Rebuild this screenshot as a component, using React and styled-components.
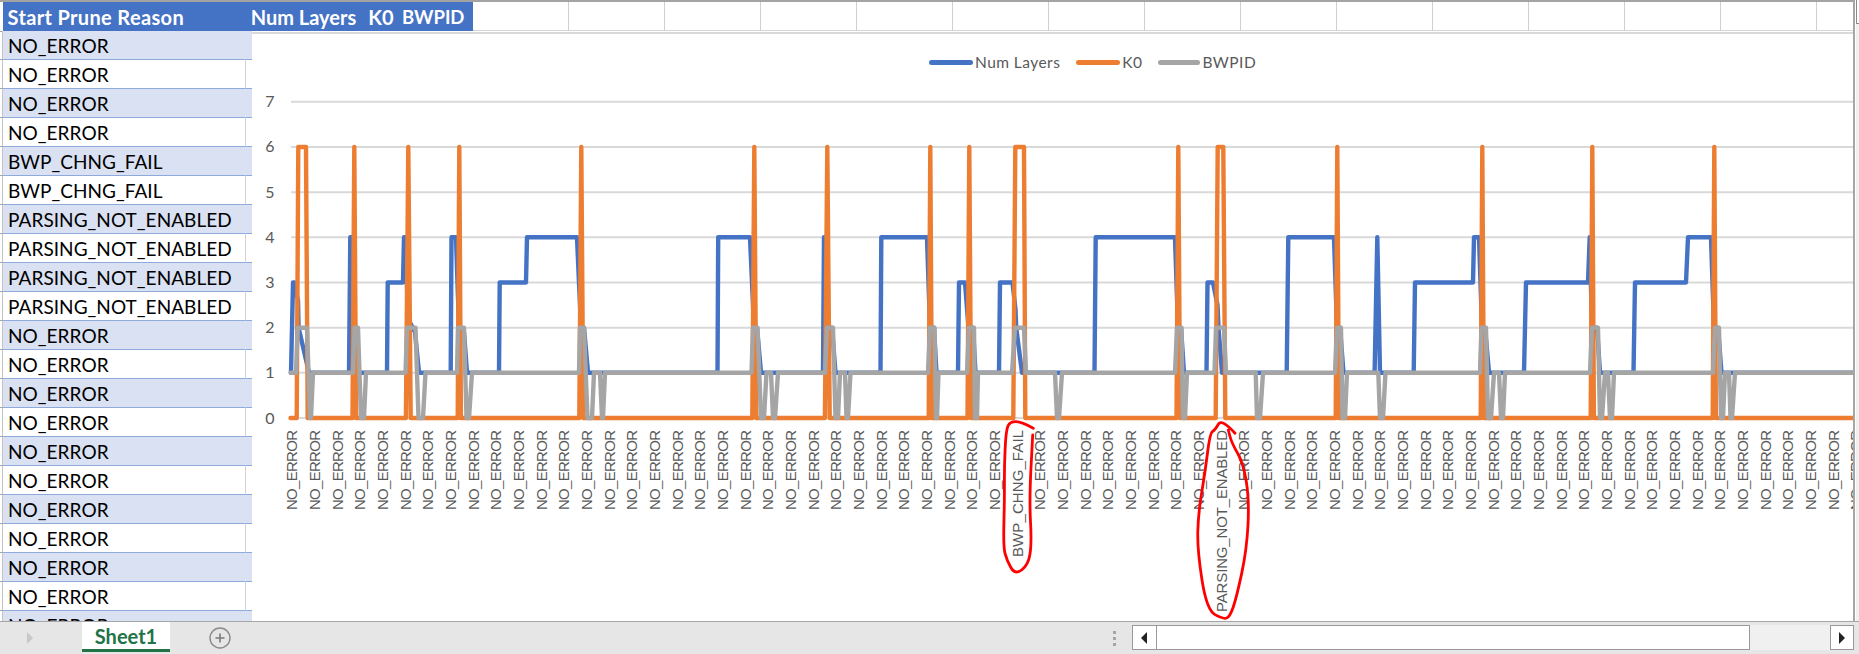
import styled, { createGlobalStyle } from "styled-components";

const GlobalStyle = createGlobalStyle`
  html, body {
    margin: 0;
    padding: 0;
    background: #fff;
    overflow: hidden;
  }
`;

const rows = [
  ...Array(4).fill("NO_ERROR"),
  ...Array(2).fill("BWP_CHNG_FAIL"),
  ...Array(4).fill("PARSING_NOT_ENABLED"),
  ...Array(11).fill("NO_ERROR"),
];

const Y0 = 418;
const STEP = 45.17;
const toY = (v) => Y0 - STEP * v;
const line = (pts) => pts.map(([x, v]) => `${x},${toY(v).toFixed(1)}`).join(" ");

const spike = (x, w = 1.3) => [[x - w, 0], [x, 6], [x + w, 0]];

const orange = [
  [290.5, 0],
  [296.7, 0], [298.3, 6], [306, 6], [307.7, 0],
  ...spike(354.3, 1.8),
  ...spike(408.3, 2.4),
  ...spike(459.3, 1.6),
  ...spike(581.3, 2),
  ...spike(754.3, 2),
  ...spike(827.3, 2.4),
  ...spike(930.3, 1.6),
  ...spike(969.3, 1.8),
  [1013.3, 0], [1015.3, 6], [1024, 6], [1025.3, 0],
  ...spike(1178.3, 1.8),
  [1215.7, 0], [1217.7, 6], [1223.3, 6], [1225.3, 0],
  ...spike(1337.3, 1.6),
  ...spike(1482.3, 1.6),
  ...spike(1592.3, 1.6),
  ...spike(1714.3, 1.6),
  [1853, 0],
];

const blue = [
  [291, 1], [293, 3], [294.5, 3], [298, 2.6], [298.6, 2], [309, 1],
  [349, 1], [350.3, 4], [352, 4], [354.5, 2.2], [359, 1], [361.7, 1],
  [387, 1], [387.7, 3], [403, 3], [404, 4], [405.5, 4], [408, 2.2], [415, 1.9], [419, 1],
  [450.7, 1], [451.5, 4], [456, 4], [459, 2], [464, 1.9], [467, 1],
  [499, 1], [499.7, 3], [526, 3], [527, 4], [577, 4], [581, 2], [584, 2], [588, 1],
  [717.5, 1], [718.2, 4], [750, 4], [754, 2], [757, 2], [761, 1], [764, 1],
  [823, 1], [824, 4], [826, 4], [828, 2], [832, 2], [835.5, 1],
  [880.5, 1], [881.3, 4], [927, 4], [930, 2], [934, 2], [936.5, 1],
  [958, 1], [959, 3], [965, 3], [968.5, 2], [973, 2], [975.5, 1],
  [999, 1], [1000, 3], [1012.5, 3], [1015.5, 2.4], [1016.2, 2], [1022, 1],
  [1094.5, 1], [1095.7, 4], [1175, 4], [1178, 2], [1181, 2], [1184, 1],
  [1206.5, 1], [1207.5, 3], [1213, 3], [1217.5, 2.5], [1218.5, 2], [1222, 1],
  [1286.7, 1], [1288.3, 4], [1334, 4], [1337, 2], [1340, 2], [1343.5, 1], [1346, 1],
  [1374.6, 1], [1377.3, 4], [1380, 1],
  [1413.7, 1], [1415, 3], [1473, 3], [1474, 4], [1479, 4], [1482, 2], [1485, 2], [1489, 1],
  [1524, 1], [1526, 3], [1588, 3], [1589.7, 4], [1592, 2], [1597, 2], [1600, 1],
  [1633.5, 1], [1635, 3], [1686, 3], [1688, 4], [1711, 4], [1714, 2], [1718, 2], [1721.5, 1],
  [1853, 1],
];

const dip = (a, b, c, d) => [[a, 1], [b, 0], [c, 0], [d, 1]];
const bump = (a, b, c, d, e, f) => [[a, 1], [b, 2], [c, 2], [d, 0], [e, 0], [f, 1]];

const gray = [
  [290.5, 1],
  ...bump(296, 297.7, 307, 310, 311, 313),
  ...bump(353, 354.5, 358, 361, 364, 366),
  ...bump(405.5, 407, 415.5, 418.5, 423, 425.5),
  ...bump(457, 458, 464, 466.5, 469, 472),
  ...bump(579, 580, 584, 587.5, 592, 594),
  ...dip(600, 602, 603, 605),
  ...bump(751.5, 753, 757.5, 761, 764, 766.5),
  ...dip(771, 773, 775, 778),
  ...bump(825, 827, 833, 835.5, 838, 840),
  ...dip(845, 846.5, 848, 850.5),
  ...bump(928, 930, 934.5, 936, 937, 938.5),
  ...bump(967, 969, 974, 975, 977, 978),
  [1012, 1], [1015, 2], [1024, 2], [1026, 1],
  ...dip(1055, 1057, 1059, 1062),
  ...bump(1175, 1177, 1181.5, 1183, 1185, 1187),
  [1214.5, 1], [1216, 2], [1224, 2], [1226, 1],
  ...dip(1255.7, 1257, 1260, 1263),
  ...bump(1335, 1337, 1341, 1342.5, 1345, 1347),
  ...dip(1378.3, 1380, 1383, 1385.5),
  ...bump(1480, 1481.5, 1486, 1488, 1491, 1494),
  ...dip(1499, 1501, 1503, 1505),
  ...bump(1590, 1592, 1598, 1600, 1602, 1605),
  ...dip(1608, 1610, 1612, 1614),
  ...bump(1713, 1715, 1719, 1721, 1723, 1725),
  ...dip(1729, 1730.5, 1732, 1735),
  [1853, 1],
];

const smooth = (pts) => {
  let d = `M${pts[0][0]} ${pts[0][1]}`;
  for (let i = 1; i < pts.length - 1; i++) {
    const mx = (pts[i][0] + pts[i + 1][0]) / 2;
    const my = (pts[i][1] + pts[i + 1][1]) / 2;
    d += ` Q${pts[i][0]} ${pts[i][1]} ${mx} ${my}`;
  }
  const last = pts[pts.length - 1];
  return `${d} L${last[0]} ${last[1]}`;
};

const ringOne = [
  [1033.3, 428.3], [1021.7, 421.7], [1010, 421.7], [1006, 430], [1004.3, 466.7],
  [1004.5, 500], [1003.3, 546.7], [1006.7, 560], [1015, 575], [1028.3, 565],
  [1031.7, 543], [1029.3, 500], [1032.7, 435],
];

const ringTwo = [
  [1235, 433.3], [1221.7, 418.5], [1215, 430], [1210, 433], [1205, 473],
  [1198.3, 513], [1197.3, 550], [1206.7, 610], [1223.3, 619.3], [1230, 616.7],
  [1236.7, 596.7], [1246.7, 550], [1249.3, 500], [1243.3, 463], [1231.7, 443],
  [1228.3, 430],
];

const labelFor = (k) => {
  if (k === 32) return { text: "BWP_CHNG_FAIL", length: 127 };
  if (k === 41) return { text: "PARSING_NOT_ENABLED", length: 182 };
  return { text: "NO_ERROR", length: 80 };
};

const categories = Array.from({ length: 70 }, (_, k) => ({
  k,
  x: 291.7 + 22.67 * k,
  ...labelFor(k),
}));

const App = () => {
  return (
    <Window>
      <GlobalStyle />
      <Grid>
        <HeaderRow>
          <Gutter />
          <HeaderBand>
            <HeadReason>Start Prune Reason</HeadReason>
            <HeadLayers>Num Layers</HeadLayers>
            <HeadK0>K0</HeadK0>
            <HeadBwp>BWPID</HeadBwp>
          </HeaderBand>
          {Array.from({ length: 15 }, (_, i) => (
            <EmptyCell key={i} />
          ))}
        </HeaderRow>
        <Body>
          <Table>
            {rows.map((text, i) => (
              <Row key={i}>
                <RowGutter />
                <Cell $shaded={i % 2 === 0}>{text}</Cell>
                <NextCell $shaded={i % 2 === 0} />
              </Row>
            ))}
          </Table>
          <ChartPanel>
            <Legend>
              <LegendItem>
                <Key $color="#4472c4" />
                <LegendText>Num Layers</LegendText>
              </LegendItem>
              <LegendItem>
                <Key $color="#ed7d31" />
                <LegendText>K0</LegendText>
              </LegendItem>
              <LegendItem>
                <Key $color="#a5a5a5" $short />
                <LegendText>BWPID</LegendText>
              </LegendItem>
            </Legend>
            <Plot viewBox="252 80 1601 541" width="1601" height="541">
              {[0, 1, 2, 3, 4, 5, 6, 7].map((v) => (
                <g key={v}>
                  <line x1="291" x2="1853" y1={toY(v)} y2={toY(v)} stroke="#d9d9d9" strokeWidth="2" />
                  <AxisText x="270" y={toY(v) + 5.5} textAnchor="middle">
                    {v}
                  </AxisText>
                </g>
              ))}
              <Series points={line(blue)} stroke="#4472c4" />
              <Series points={line(orange)} stroke="#ed7d31" />
              <Series points={line(gray)} stroke="#a5a5a5" />
              {categories.map((c) => (
                <CategoryText
                  key={c.k}
                  x={c.x + 5.5}
                  y="430"
                  textAnchor="end"
                  textLength={c.length}
                  lengthAdjust="spacing"
                  transform={`rotate(-90 ${c.x + 5.5} 430)`}
                >
                  {c.text}
                </CategoryText>
              ))}
              <Ring d={smooth(ringOne)} />
              <Ring d={smooth(ringTwo)} />
            </Plot>
          </ChartPanel>
          <VerticalBar>
            <VerticalButton />
          </VerticalBar>
        </Body>
      </Grid>
      <StatusBar>
        <TabNav>
          <svg width="8" height="14" viewBox="0 0 8 14">
            <path d="M1 1 L7 7 L1 13 Z" fill="#c8c8c8" />
          </svg>
        </TabNav>
        <SheetTab>Sheet1</SheetTab>
        <AddSheet>
          <svg width="22" height="22" viewBox="0 0 22 22">
            <circle cx="11" cy="11" r="10" fill="none" stroke="#8a8a8a" strokeWidth="1.4" />
            <path d="M11 6.5 V15.5 M6.5 11 H15.5" stroke="#7a7a7a" strokeWidth="1.6" />
          </svg>
        </AddSheet>
        <Splitter>
          <Dot />
          <Dot />
          <Dot />
        </Splitter>
        <ScrollBar>
          <ScrollButton>
            <svg width="7" height="12" viewBox="0 0 7 12">
              <path d="M6 0 L0 6 L6 12 Z" fill="#222" />
            </svg>
          </ScrollButton>
          <ScrollThumb />
          <ScrollTrack />
          <ScrollButton>
            <svg width="7" height="12" viewBox="0 0 7 12">
              <path d="M1 0 L7 6 L1 12 Z" fill="#222" />
            </svg>
          </ScrollButton>
        </ScrollBar>
      </StatusBar>
    </Window>
  );
};

export default App;

const Window = styled.div`
  width: 1859px;
  height: 654px;
  display: flex;
  flex-direction: column;
  overflow: hidden;
  background: #fff;
  font-family: Lato, "Open Sans", sans-serif;
`;

const Grid = styled.div`
  height: 621px;
  display: flex;
  flex-direction: column;
  overflow: hidden;
`;

const HeaderRow = styled.div`
  height: 32px;
  flex: none;
  display: flex;
  box-sizing: border-box;
  border-top: 2px solid #a3a3a3;
`;

const Gutter = styled.div`
  width: 3px;
  flex: none;
  border-bottom: 1px solid #a3a3a3;
  box-sizing: border-box;
`;

const HeaderBand = styled.div`
  width: 470px;
  flex: none;
  height: 29px;
  display: flex;
  align-items: center;
  background: #4472c4;
  color: #fff;
  font-size: 20px;
  font-weight: 700;
`;

const HeadReason = styled.span`
  width: 247.7px;
  padding-left: 4.5px;
  box-sizing: border-box;
  letter-spacing: 0.35px;
`;

const HeadLayers = styled.span`
  width: 117.5px;
`;

const HeadK0 = styled.span`
  width: 33.8px;
`;

const HeadBwp = styled.span`
  width: 70px;
  font-size: 18.5px;
`;

const EmptyCell = styled.div`
  width: 96px;
  flex: none;
  height: 29px;
  box-sizing: border-box;
  border-right: 1px solid #cfcfcf;
  border-bottom: 1px solid #d4d4d4;
`;

const Body = styled.div`
  flex: 1;
  min-height: 0;
  display: flex;
`;

const Table = styled.div`
  width: 252px;
  flex: none;
  margin-top: -1px;
  overflow: hidden;
`;

const Row = styled.div`
  height: 29px;
  display: flex;
`;

const RowGutter = styled.div`
  width: 3px;
  flex: none;
  box-sizing: border-box;
  border-bottom: 1px solid #a3a3a3;
  border-right: 1px solid #c4c4c4;
`;

const Cell = styled.div`
  width: 243px;
  flex: none;
  box-sizing: border-box;
  padding: 1px 0 0 5px;
  background: ${({ $shaded }) => ($shaded ? "#d9e1f2" : "#fff")};
  border-bottom: 1px solid #8ea9db;
  border-right: 1px solid ${({ $shaded }) => ($shaded ? "#d9e1f2" : "#d4d4d4")};
  color: #000;
  font-size: 19px;
  letter-spacing: 0.05px;
  line-height: 27px;
  white-space: nowrap;
`;

const NextCell = styled.div`
  flex: 1;
  box-sizing: border-box;
  background: ${({ $shaded }) => ($shaded ? "#d9e1f2" : "#fff")};
  border-bottom: 1px solid #8ea9db;
`;

const ChartPanel = styled.div`
  width: 1601px;
  flex: none;
  display: flex;
  flex-direction: column;
  border-top: 2px solid #d9d9d9;
  overflow: hidden;
`;

const Legend = styled.div`
  height: 46px;
  flex: none;
  display: flex;
  align-items: center;
  box-sizing: border-box;
  padding: 10px 0 0 677px;
  gap: 16px;
`;

const LegendItem = styled.div`
  display: flex;
  align-items: center;
  gap: 2px;
`;

const Key = styled.span`
  width: ${({ $short }) => ($short ? "42px" : "44px")};
  height: 5px;
  border-radius: 3px;
  background: ${({ $color }) => $color};
`;

const LegendText = styled.span`
  color: #595959;
  font-size: 15.5px;
  letter-spacing: 0.45px;
`;

const Plot = styled.svg`
  display: block;
  flex: none;
`;

const AxisText = styled.text`
  fill: #595959;
  font-family: Lato, "Open Sans", sans-serif;
  font-size: 16px;
`;

const CategoryText = styled.text`
  fill: #595959;
  font-family: "Liberation Sans", Arial, sans-serif;
  font-size: 15px;
`;

const Series = styled.polyline`
  fill: none;
  stroke-width: 4.4;
  stroke-linejoin: round;
  stroke-linecap: round;
`;

const Ring = styled.path`
  fill: none;
  stroke: #ff0000;
  stroke-width: 2.8;
  stroke-linecap: round;
  stroke-linejoin: round;
`;

const VerticalBar = styled.div`
  flex: 1;
  box-sizing: border-box;
  border-left: 2.5px solid #a6a6a6;
  background: linear-gradient(to right, #fff 1px, #f0f0f0 1px);
  margin-top: -32px;
`;

const VerticalButton = styled.div`
  height: 24px;
  margin-left: 1px;
  box-sizing: border-box;
  background: #fff;
  border-left: 1px solid #8a8a8a;
  border-bottom: 1px solid #8a8a8a;
`;

const StatusBar = styled.div`
  flex: 1;
  display: flex;
  align-items: flex-start;
  box-sizing: border-box;
  border-top: 1px solid #a6a6a6;
  background: #e6e6e6;
`;

const TabNav = styled.div`
  width: 82px;
  height: 32px;
  flex: none;
  box-sizing: border-box;
  padding-left: 26px;
  display: flex;
  align-items: center;
`;

const SheetTab = styled.div`
  width: 88px;
  height: 30px;
  flex: none;
  box-sizing: border-box;
  display: flex;
  align-items: center;
  justify-content: center;
  background: #fff;
  border-bottom: 3px solid #217346;
  color: #217346;
  font-size: 20px;
  font-weight: 700;
`;

const AddSheet = styled.div`
  margin-left: 39px;
  height: 32px;
  flex: none;
  display: flex;
  align-items: center;
`;

const Splitter = styled.div`
  margin-left: 882px;
  width: 4px;
  height: 32px;
  flex: none;
  display: flex;
  flex-direction: column;
  justify-content: center;
  gap: 3px;
`;

const Dot = styled.span`
  width: 3px;
  height: 3px;
  background: #a6a6a6;
`;

const ScrollBar = styled.div`
  margin-left: 15px;
  margin-top: 3px;
  width: 722px;
  height: 25px;
  flex: none;
  display: flex;
`;

const ScrollButton = styled.div`
  width: 24.5px;
  flex: none;
  box-sizing: border-box;
  display: flex;
  align-items: center;
  justify-content: center;
  background: #fff;
  border: 1.5px solid #999;
`;

const ScrollThumb = styled.div`
  width: 593px;
  flex: none;
  box-sizing: border-box;
  background: #fff;
  border: 1.5px solid #999;
  border-left: none;
`;

const ScrollTrack = styled.div`
  flex: 1;
  background: #f0f0f0;
`;
